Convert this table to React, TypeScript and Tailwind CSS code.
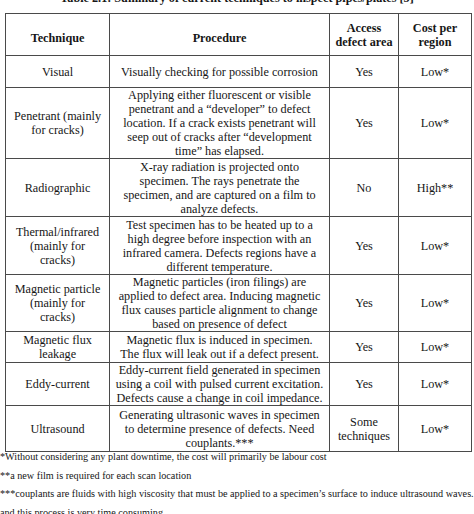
const rows = [
  {
    technique: ["Visual"],
    procedure: ["Visually checking for possible corrosion"],
    access: ["Yes"],
    cost: "Low*",
    h: "h-[32px]",
  },
  {
    technique: ["Penetrant (mainly", "for cracks)"],
    procedure: [
      "Applying either fluorescent or visible",
      "penetrant and a \u201cdeveloper\u201d to defect",
      "location. If a crack exists penetrant will",
      "seep out of cracks after \u201cdevelopment",
      "time\u201d has elapsed.",
    ],
    access: ["Yes"],
    cost: "Low*",
    h: "h-[71px]",
  },
  {
    technique: ["Radiographic"],
    procedure: [
      "X-ray radiation is projected onto",
      "specimen. The rays penetrate the",
      "specimen, and are captured on a film to",
      "analyze defects.",
    ],
    access: ["No"],
    cost: "High**",
    h: "h-[58px]",
  },
  {
    technique: ["Thermal/infrared", "(mainly for", "cracks)"],
    procedure: [
      "Test specimen has to be heated up to a",
      "high degree before inspection with an",
      "infrared camera. Defects regions have a",
      "different temperature.",
    ],
    access: ["Yes"],
    cost: "Low*",
    h: "h-[58px]",
  },
  {
    technique: ["Magnetic particle", "(mainly for", "cracks)"],
    procedure: [
      "Magnetic particles (iron filings) are",
      "applied to defect area. Inducing magnetic",
      "flux causes particle alignment to change",
      "based on presence of defect",
    ],
    access: ["Yes"],
    cost: "Low*",
    h: "h-[57px]",
  },
  {
    technique: ["Magnetic flux", "leakage"],
    procedure: [
      "Magnetic flux is induced in specimen.",
      "The flux will leak out if a defect present.",
    ],
    access: ["Yes"],
    cost: "Low*",
    h: "h-[31px]",
  },
  {
    technique: ["Eddy-current"],
    procedure: [
      "Eddy-current field generated in specimen",
      "using a coil with pulsed current excitation.",
      "Defects cause a change in coil impedance.",
    ],
    access: ["Yes"],
    cost: "Low*",
    h: "h-[41px]",
  },
  {
    technique: ["Ultrasound"],
    procedure: [
      "Generating ultrasonic waves in specimen",
      "to determine presence of defects. Need",
      "couplants.***",
    ],
    access: ["Some", "techniques"],
    cost: "Low*",
    h: "h-[46px]",
  },
];

function Lines({ lines }: { lines: string[] }) {
  return (
    <>
      {lines.map((l, i) => (
        <div key={i} className="whitespace-nowrap">
          {l}
        </div>
      ))}
    </>
  );
}

export default function App() {
  return (
    <div className="w-[474px] h-[514px] overflow-hidden bg-white text-[#161616] font-['Liberation_Serif','Times_New_Roman',serif]">
      <div className="-mt-[9px] h-[14px] text-center text-[12.2px] leading-[14px] font-bold">
        Table 2.1: Summary of current techniques to inspect pipes/plates [5]
      </div>
      <table className="mt-[8px] ml-[5px] w-[466px] table-fixed border-collapse text-[12.2px] leading-[14px]">
        <colgroup>
          <col className="w-[104px]" />
          <col className="w-[220px]" />
          <col className="w-[69px]" />
          <col className="w-[73px]" />
        </colgroup>
        <thead>
          <tr className="h-[42px] font-bold">
            <th className="border border-[#4a4a4a] p-0 align-middle pt-[6px]">Technique</th>
            <th className="border border-[#4a4a4a] p-0 align-middle pt-[6px]">Procedure</th>
            <th className="border border-[#4a4a4a] p-0 align-middle">
              <div>Access</div>
              <div className="whitespace-nowrap">defect area</div>
            </th>
            <th className="border border-[#4a4a4a] p-0 align-middle">
              <div>Cost per</div>
              <div>region</div>
            </th>
          </tr>
        </thead>
        <tbody>
          {rows.map((r, i) => (
            <tr key={i} className={r.h}>
              <td className="border border-[#4a4a4a] p-0 text-center align-middle">
                <Lines lines={r.technique} />
              </td>
              <td className="border border-[#4a4a4a] p-0 text-center align-middle">
                <Lines lines={r.procedure} />
              </td>
              <td className="border border-[#4a4a4a] p-0 text-center align-middle">
                <Lines lines={r.access} />
              </td>
              <td className="border border-[#4a4a4a] p-0 text-center align-middle">
                {r.cost}
              </td>
            </tr>
          ))}
        </tbody>
      </table>
      <div className="-mt-[4px] text-[10.2px] leading-[18.6px] whitespace-nowrap">
        <div>*Without considering any plant downtime, the cost will primarily be labour cost</div>
        <div>**a new film is required for each scan location</div>
        <div>
          ***couplants are fluids with high viscosity that must be applied to a specimen{"\u2019"}s surface to induce ultrasound waves.
        </div>
        <div>and this process is very time consuming</div>
      </div>
    </div>
  );
}
